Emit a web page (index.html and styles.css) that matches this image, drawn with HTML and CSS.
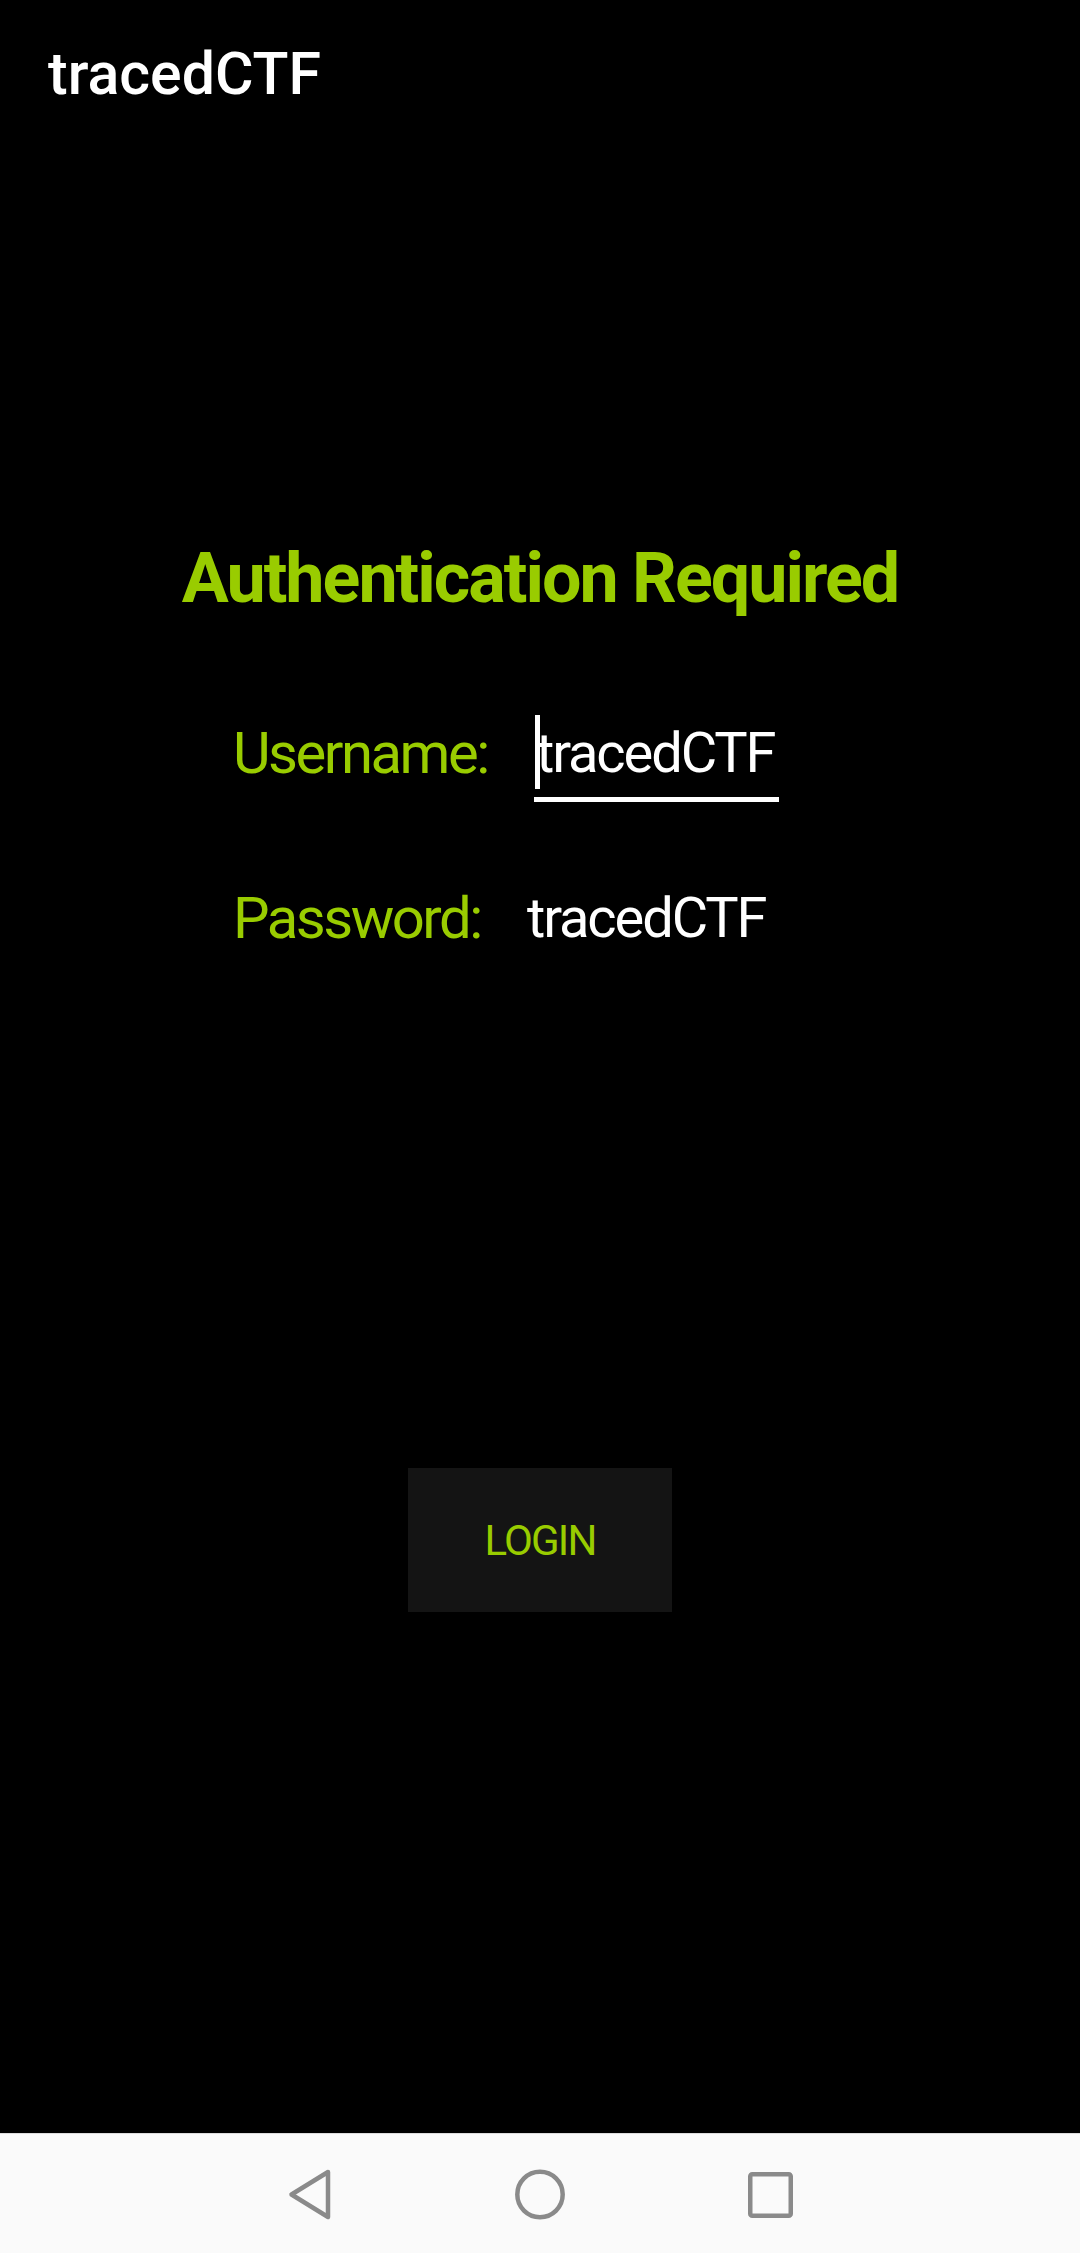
FILE: index.html
```html
<!DOCTYPE html>
<html lang="en">
<head>
<meta charset="utf-8">
<title>tracedCTF</title>
<link rel="stylesheet" href="styles.css">
</head>
<body>
<div class="app">
  <header class="toolbar">
    <span class="toolbar__title">tracedCTF</span>
  </header>
  <main class="content">
    <h1 class="heading">Authentication Required</h1>
    <div class="form">
      <span class="label">Username:</span>
      <span class="field">tracedCTF</span>
      <span class="label">Password:</span>
      <span class="value">tracedCTF</span>
    </div>
    <button class="login" type="button">LOGIN</button>
  </main>
  <nav class="navbar">
    <svg class="navbar__icon" viewBox="0 0 60 60" width="60" height="60" aria-label="Back">
      <path d="M49 8 L12.5 30.5 L49 53 Z" fill="none" stroke="#8a8a8a" stroke-width="4.5" stroke-linejoin="round"/>
    </svg>
    <svg class="navbar__icon" viewBox="0 0 60 60" width="60" height="60" aria-label="Home">
      <circle cx="30" cy="30.5" r="22.7" fill="none" stroke="#8a8a8a" stroke-width="4.5"/>
    </svg>
    <svg class="navbar__icon" viewBox="0 0 60 60" width="60" height="60" aria-label="Recents">
      <rect x="9.25" y="10.25" width="40.5" height="41.5" rx="2" fill="none" stroke="#8a8a8a" stroke-width="4.5"/>
    </svg>
  </nav>
</div>
</body>
</html>
```
FILE: styles.css
```css
html, body {
  margin: 0;
  padding: 0;
  background: #000;
}

.app {
  width: 1080px;
  height: 2253px;
  display: flex;
  flex-direction: column;
  font-family: Roboto, "Liberation Sans", sans-serif;
}

.toolbar {
  flex: none;
  height: 147px;
  display: flex;
  align-items: center;
  padding-left: 48px;
}

.toolbar__title {
  font-weight: 500;
  font-size: 59px;
  line-height: 69px;
  color: #fff;
}

.content {
  flex: 1;
  display: flex;
  flex-direction: column;
  align-items: center;
  padding-top: 391px;
}

.heading {
  margin: 0;
  font-weight: 700;
  font-size: 70px;
  line-height: 80px;
  letter-spacing: -2px;
  color: #99cc00;
}

.form {
  align-self: flex-start;
  margin-left: 233px;
  margin-top: 100px;
  display: grid;
  grid-template-columns: 301px 245px;
  row-gap: 81px;
  align-items: start;
}

.label {
  font-size: 58px;
  line-height: 70px;
  letter-spacing: -2.5px;
  color: #99cc00;
  white-space: nowrap;
}

.field,
.value {
  font-size: 56px;
  line-height: 70px;
  letter-spacing: -2.1px;
  color: #fff;
  white-space: nowrap;
}

.field {
  position: relative;
  box-sizing: border-box;
  width: 245px;
  padding: 0 0 9px 2px;
  border-bottom: 5px solid #fff;
}

.field::before {
  content: "";
  position: absolute;
  left: 1px;
  top: -3px;
  width: 5px;
  height: 74px;
  background: #fff;
}

.value {
  margin-left: -7px;
}

.login {
  margin-top: 515px;
  width: 264px;
  height: 144px;
  padding: 0;
  border: 0;
  border-radius: 0;
  background: #141414;
  color: #99cc00;
  font-family: Roboto, "Liberation Sans", sans-serif;
  font-size: 42px;
  letter-spacing: -1.8px;
}

.navbar {
  flex: none;
  box-sizing: border-box;
  height: 120px;
  border-top: 1px solid #dcdcdc;
  background: #fafafa;
  display: flex;
  justify-content: center;
  align-items: center;
  gap: 171px;
}

.navbar__icon {
  display: block;
}
```
